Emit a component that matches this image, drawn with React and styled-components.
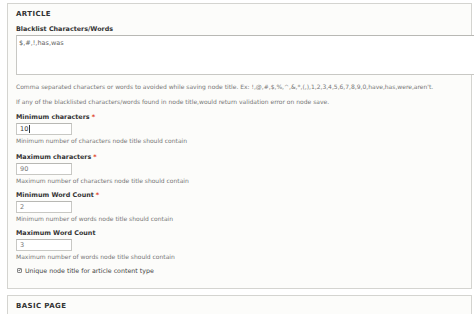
import React from 'react'
import styled, {createGlobalStyle} from 'styled-components'

const GlobalStyle = createGlobalStyle`
  html, body {
    margin: 0;
    padding: 0;
    background: #ffffff;
  }
  body {
    font-family: "DejaVu Sans", Verdana, sans-serif;
    color: #333;
    overflow: hidden;
  }
`

const Page = styled.div`
  width: 474px;
  height: 314px;
  padding: 3px 2px 0 7px;
  box-sizing: border-box;
  display: flex;
  flex-direction: column;
  gap: 6px;
`

const Fieldset = styled.section`
  border: 1px solid #d4d4d0;
  background: #fcfcfa;
  padding: 5px 0 13px 8px;
  display: flex;
  flex-direction: column;
  flex-shrink: 0;
`

const Legend = styled.div`
  font-size: 7px;
  line-height: 10px;
  font-weight: bold;
  letter-spacing: 0.4px;
  text-transform: uppercase;
  color: #333;
  margin-bottom: ${p => p.$gap || 0}px;
`

const Label = styled.div`
  font-size: 6.4px;
  line-height: 10px;
  font-weight: bold;
  color: #333;
  margin-top: ${p => p.$top || 0}px;
  margin-bottom: 1px;
`

const Required = styled.span`
  color: #e0482e;
  margin-left: 2px;
`

const TextArea = styled.div`
  width: 470px;
  height: 40px;
  box-sizing: border-box;
  border: 1px solid #c8c8c4;
  border-top-color: #b8b8b4;
  background: #fff;
  padding: 3px 2px;
  font-size: 6.5px;
  line-height: 8px;
  color: #666;
`

const Description = styled.div`
  font-size: 6px;
  line-height: 9px;
  color: #777;
  margin-top: ${p => p.$top || 0}px;
`

const Input = styled.div`
  width: 56px;
  height: 12px;
  box-sizing: border-box;
  border: 1px solid #c8c8c4;
  border-top-color: #b8b8b4;
  background: #fff;
  padding: 0 3px;
  font-size: 6.5px;
  line-height: 10px;
  color: ${p => (p.$focused ? '#333' : '#777')};
  display: flex;
  align-items: center;
`

const Caret = styled.span`
  width: 1px;
  height: 8px;
  background: #333;
  margin-left: 0.5px;
`

const CheckRow = styled.div`
  display: flex;
  align-items: center;
  gap: 3px;
  margin-top: 4.5px;
  margin-left: 1px;
  font-size: 6.3px;
  line-height: 9px;
  color: #444;
`

const Box = styled.span`
  width: 5px;
  height: 5px;
  box-sizing: border-box;
  border: 0.6px solid #888;
  border-radius: 1px;
  background: #f4f4f4;
  display: flex;
  align-items: center;
  justify-content: center;
`

const fields = [
  {label: 'Minimum characters', required: true, value: '10', focused: true, desc: 'Minimum number of characters node title should contain', top: 6},
  {label: 'Maximum characters', required: true, value: '90', desc: 'Maximum number of characters node title should contain', top: 6.5},
  {label: 'Minimum Word Count', required: true, value: '2', desc: 'Minimum number of words node title should contain', top: 5.5},
  {label: 'Maximum Word Count', required: false, value: '3', desc: 'Maximum number of words node title should contain', top: 5},
]

const Field = ({field}) => (
  <>
    <Label $top={field.top}>
      {field.label}
      {field.required && <Required>*</Required>}
    </Label>
    <Input $focused={field.focused}>
      {field.value}
      {field.focused && <Caret/>}
    </Input>
    <Description $top={1}>{field.desc}</Description>
  </>
)

const App = () => {
  return (
    <Page>
      <GlobalStyle/>
      <Fieldset>
        <Legend $gap={5}>Article</Legend>
        <Label>Blacklist Characters/Words</Label>
        <TextArea>$,#,!,has,was</TextArea>
        <Description $top={7}>
          Comma separated characters or words to avoided while saving node title. Ex: !,@,#,$,%,^,&amp;,*,(,),1,2,3,4,5,6,7,8,9,0,have,has,were,aren't.
        </Description>
        <Description $top={6}>
          If any of the blacklisted characters/words found in node title,would return validation error on node save.
        </Description>
        {fields.map(f => <Field key={f.label} field={f}/>)}
        <CheckRow>
          <Box>
            <svg width="4" height="4" viewBox="0 0 10 10">
              <path d="M1.5 5.5 L4 8 L8.5 2" fill="none" stroke="#333" strokeWidth="2"/>
            </svg>
          </Box>
          Unique node title for article content type
        </CheckRow>
      </Fieldset>
      <Fieldset>
        <Legend>Basic page</Legend>
      </Fieldset>
    </Page>
  )
}

export default App
